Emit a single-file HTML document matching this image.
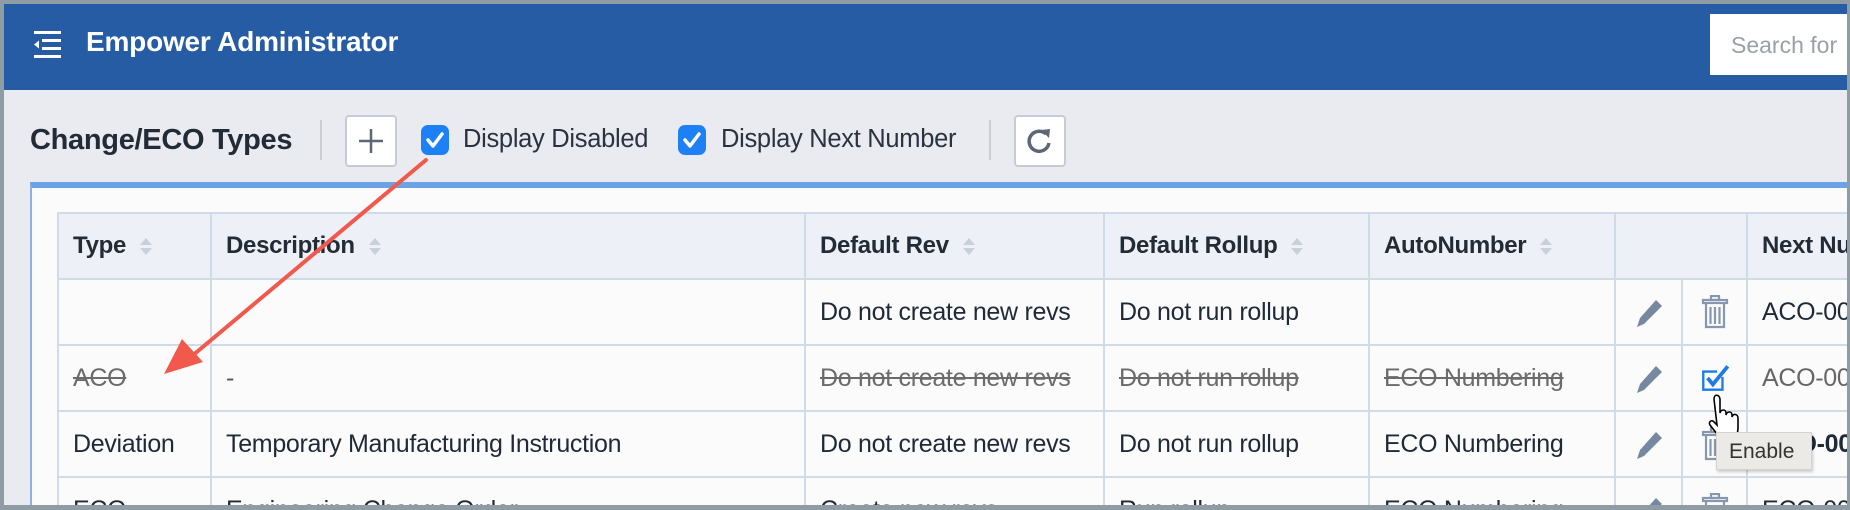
<!DOCTYPE html>
<html><head><meta charset="utf-8"><style>
*{box-sizing:border-box;margin:0;padding:0}
body{width:1850px;height:510px;overflow:hidden;background:#8f9ca4;font-family:"Liberation Sans",Arial,sans-serif;color:#1f2937;position:relative}
#frame{position:absolute;left:4px;top:4px;width:1843px;height:501px;background:#e9ebf0;overflow:hidden}
#hdr{position:absolute;left:0;top:0;width:100%;height:86px;background:#265ca3}
#title{position:absolute;left:82px;top:22px;color:#fff;font-weight:bold;font-size:28px;letter-spacing:-0.2px}
#search{position:absolute;left:1706px;top:10px;width:200px;height:61px;background:#fff;color:#9aa0a8;font-size:23px;padding:18px 0 0 21px}
.abs{position:absolute}
#h1{left:26px;top:120px;font-size:29px;font-weight:bold;color:#222b36;letter-spacing:-0.3px}
.sep{width:2px;background:#c9ced6;height:40px;top:116px}
.btn{top:111px;width:52px;height:52px;border:2px solid #c5ccd6;border-radius:4px;background:#fff}
.cb{top:121px;width:28px;height:30px;background:#1e80f5;border-radius:7px}
.lbl{top:121px;font-size:25.5px;color:#2b3340;letter-spacing:-0.3px}
#panel{position:absolute;left:26px;top:178px;width:1830px;height:323px;background:#fbfbfc;border-top:6px solid #6ea2e6;border-left:2px solid #8fb1e2}
table{position:absolute;left:53px;top:208px;width:1849px;border-collapse:collapse;table-layout:fixed;font-size:25px;letter-spacing:-0.3px}
td,th{border:2px solid #cfdbe6;height:66px;padding:0 14px;white-space:nowrap;overflow:hidden;text-align:left}
th{background:#edf0f6;font-weight:bold;font-size:24px;color:#222b36}
td{background:#fbfbfc;color:#1f2937}
.s{color:#6b6b6b;text-decoration:line-through}
.ar{display:inline-block;margin-left:14px;vertical-align:middle;width:12px;height:20px;position:relative}
.ar:before{content:"";position:absolute;left:0;top:1px;border:6px solid transparent;border-bottom:7px solid #c8d0da;border-top:0}
.ar:after{content:"";position:absolute;left:0;top:11px;border:6px solid transparent;border-top:7px solid #c8d0da;border-bottom:0}
.ic{padding:0;text-align:center}
.ic svg{vertical-align:middle}
#tip{position:absolute;left:1712px;top:428px;width:96px;height:38px;background:#eceae6;border:1px solid #d6d3cd;font-size:21px;color:#333;padding:7px 0 0 12px;box-shadow:1px 2px 3px rgba(0,0,0,.2)}
</style></head><body>
<div id="frame">
<div id="hdr">
<svg class="abs" style="left:27px;top:26px" width="32" height="30" viewBox="0 0 32 30"><g fill="#fff"><rect x="3" y="1" width="27" height="3"/><rect x="11" y="9" width="19" height="3"/><rect x="11" y="17" width="19" height="3"/><rect x="3" y="25" width="27" height="3"/><path d="M3 14.5 L8 10.5 L8 18.5Z"/></g></svg>
<div id="title">Empower Administrator</div>
<div id="search">Search for</div>
</div>
<div class="abs" id="h1">Change/ECO Types</div>
<div class="abs sep" style="left:316px"></div>
<div class="abs btn" style="left:341px"><svg width="48" height="48" viewBox="0 0 48 48"><path d="M24 12V36M12 24H36" stroke="#5c6675" stroke-width="2.5"/></svg></div>
<div class="abs cb" style="left:417px"><svg width="28" height="30" viewBox="0 0 28 30"><path d="M7 15l5 6 9-12" stroke="#fff" stroke-width="3.5" fill="none" stroke-linecap="round" stroke-linejoin="round"/></svg></div>
<div class="abs lbl" style="left:459px">Display Disabled</div>
<div class="abs cb" style="left:674px"><svg width="28" height="30" viewBox="0 0 28 30"><path d="M7 15l5 6 9-12" stroke="#fff" stroke-width="3.5" fill="none" stroke-linecap="round" stroke-linejoin="round"/></svg></div>
<div class="abs lbl" style="left:717px">Display Next Number</div>
<div class="abs sep" style="left:985px"></div>
<div class="abs btn" style="left:1010px"><svg width="48" height="48" viewBox="0 0 48 48"><path d="M30 17A10 10 0 1 0 33 26" stroke="#5c6675" stroke-width="3.5" fill="none"/><path d="M25 13L34 12L33 21Z" fill="#5c6675"/></svg></div>
<div id="panel"></div>
<table>
<colgroup><col style="width:153px"><col style="width:594px"><col style="width:299px"><col style="width:265px"><col style="width:246px"><col style="width:67px"><col style="width:65px"><col style="width:160px"></colgroup>
<tr><th>Type<span class="ar"></span></th><th>Description<span class="ar"></span></th><th>Default Rev<span class="ar"></span></th><th>Default Rollup<span class="ar"></span></th><th>AutoNumber<span class="ar"></span></th><th colspan="2"></th><th>Next Nu</th></tr>
<tr><td></td><td></td><td>Do not create new revs</td><td>Do not run rollup</td><td></td><td class="ic"><svg width="30" height="34" viewBox="0 0 30 34"><path d="M3 32l3-9L22 5l6 6L10 29z" fill="#7687a0"/></svg></td><td class="ic"><svg width="30" height="34" viewBox="0 0 30 34"><g fill="none" stroke="#8797ad" stroke-width="2.2"><rect x="3" y="5" width="24" height="3"/><rect x="11" y="1" width="8" height="4"/><path d="M6 9v23h18V9M10.5 12v17M15 12v17M19.5 12v17"/></g></svg></td><td>ACO-00</td></tr>
<tr><td class="s">ACO</td><td style="color:#555">-</td><td class="s">Do not create new revs</td><td class="s">Do not run rollup</td><td class="s">ECO Numbering</td><td class="ic"><svg width="30" height="34" viewBox="0 0 30 34"><path d="M3 32l3-9L22 5l6 6L10 29z" fill="#7687a0"/></svg></td><td class="ic"><svg width="32" height="32" viewBox="0 0 30 30"><path d="M22 14v12H4V9h13" fill="none" stroke="#1e7be6" stroke-width="2.2"/><path d="M8 15l5 6L27 4" fill="none" stroke="#1e7be6" stroke-width="3.5"/></svg></td><td style="color:#666">ACO-00</td></tr>
<tr><td>Deviation</td><td>Temporary Manufacturing Instruction</td><td>Do not create new revs</td><td>Do not run rollup</td><td>ECO Numbering</td><td class="ic"><svg width="30" height="34" viewBox="0 0 30 34"><path d="M3 32l3-9L22 5l6 6L10 29z" fill="#7687a0"/></svg></td><td class="ic"><svg width="30" height="34" viewBox="0 0 30 34"><g fill="none" stroke="#8797ad" stroke-width="2.2"><rect x="3" y="5" width="24" height="3"/><rect x="11" y="1" width="8" height="4"/><path d="M6 9v23h18V9M10.5 12v17M15 12v17M19.5 12v17"/></g></svg></td><td style="font-weight:bold">ACO-00</td></tr>
<tr><td>ECO</td><td>Engineering Change Order</td><td>Create new revs</td><td>Run rollup</td><td>ECO Numbering</td><td class="ic"><svg width="30" height="34" viewBox="0 0 30 34"><path d="M3 32l3-9L22 5l6 6L10 29z" fill="#7687a0"/></svg></td><td class="ic"><svg width="30" height="34" viewBox="0 0 30 34"><g fill="none" stroke="#8797ad" stroke-width="2.2"><rect x="3" y="5" width="24" height="3"/><rect x="11" y="1" width="8" height="4"/><path d="M6 9v23h18V9M10.5 12v17M15 12v17M19.5 12v17"/></g></svg></td><td>ECO-00</td></tr>
</table>
<svg class="abs" style="left:0;top:0" width="1843" height="501"><g fill="#f0594b"><path d="M422 156 L188 352" stroke="#f0594b" stroke-width="4" stroke-linecap="round"/><path d="M160 370 L178 335 L199 358Z"/></g>
<path d="M1710 395c0-5 5-5 6 0v14c1-4 6-4 6 0v2c1-4 6-4 6 0v2c1-4 6-3 6 1v10c0 6-3 11-8 11h-6c-3 0-5-2-7-5l-7-9c-2-3 2-6 4-3l3 3z" fill="#fff" stroke="#000" stroke-width="1.6"/></svg>
<div id="tip">Enable</div>
</div>
</body></html>
